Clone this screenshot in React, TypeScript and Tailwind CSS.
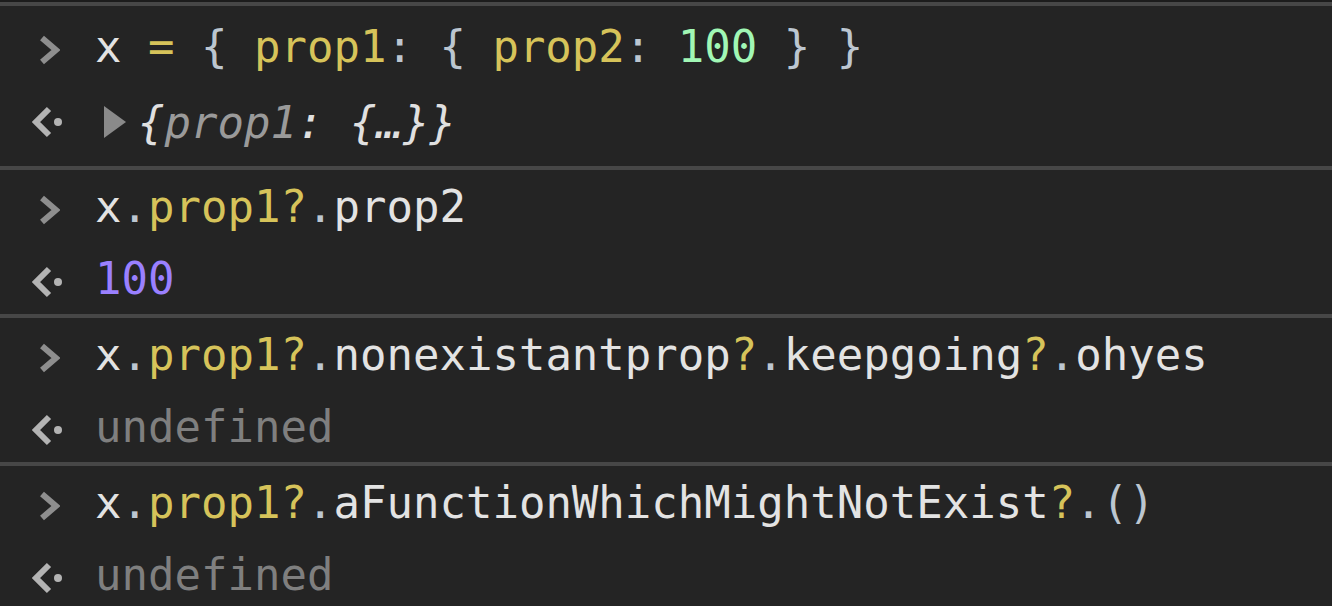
import React from "react";

const Y = "text-[#d6c35a]";
const P = "text-[#bcc6d0]";
const W = "text-[#e3e3e3]";

function Prompt() {
  return (
    <div className="w-[95px] shrink-0 pl-[39px] mt-[8px] flex items-center">
      <svg width="21" height="30" viewBox="0 0 21 30">
        <polyline points="3,3 17,15 3,27" fill="none" stroke="#8e8e8e" strokeWidth="6" strokeLinejoin="miter" />
      </svg>
    </div>
  );
}

function Result() {
  return (
    <div className="w-[95px] shrink-0 pl-[32px] mt-[8px] flex items-center">
      <svg width="32" height="32" viewBox="0 0 32 32">
        <polyline points="17,3 4,16 17,29" fill="none" stroke="#b3b3b3" strokeWidth="6" strokeLinejoin="miter" />
        <circle cx="26" cy="16" r="4" fill="#b3b3b3" />
      </svg>
    </div>
  );
}

function Row({ children }: { children: React.ReactNode }) {
  return <div className="h-[72px] flex items-center">{children}</div>;
}

function Sep() {
  return <div className="h-[4px] bg-[#474747]" />;
}

export default function App() {
  return (
    <div
      className="w-[1332px] h-[606px] overflow-hidden bg-[#242424] text-[44px] leading-[51px] whitespace-pre"
      style={{ fontFamily: '"DejaVu Sans Mono", "Liberation Mono", monospace' }}
    >
      <div className="h-[2px] bg-[#1c1c1c]" />
      <Sep />
      <div className="pt-[4px] pb-[12px]">
        <Row>
          <Prompt />
          <span>
            <span className={W}>x</span>
            <span className={Y}> = </span>
            <span className={P}>{"{ "}</span>
            <span className={Y}>prop1</span>
            <span className={P}>{": { "}</span>
            <span className={Y}>prop2</span>
            <span className={P}>: </span>
            <span className="text-[#a1f7b5]">100</span>
            <span className={P}>{" } }"}</span>
          </span>
        </Row>
        <Row>
          <Result />
          <div className="flex items-center mt-[8px]">
            <svg width="22" height="32" viewBox="0 0 22 32" className="ml-[9px]">
              <polygon points="0,0 22,16 0,32" fill="#8a8a8a" />
            </svg>
            <span className="italic ml-[12px]">
              <span className="text-[#e0e0e0]">{"{"}</span>
              <span className="text-[#9a9a9a]">prop1</span>
              <span className="text-[#e0e0e0]">{": {…}}"}</span>
            </span>
          </div>
        </Row>
      </div>
      <Sep />
      <Row>
        <Prompt />
        <span>
          <span className={W}>x</span>
          <span className={P}>.</span>
          <span className={Y}>prop1?</span>
          <span className={P}>.</span>
          <span className={W}>prop2</span>
        </span>
      </Row>
      <Row>
        <Result />
        <span className="text-[#9a80ff]">100</span>
      </Row>
      <Sep />
      <Row>
        <Prompt />
        <span>
          <span className={W}>x</span>
          <span className={P}>.</span>
          <span className={Y}>prop1?</span>
          <span className={P}>.</span>
          <span className={W}>nonexistantprop</span>
          <span className={Y}>?</span>
          <span className={P}>.</span>
          <span className={W}>keepgoing</span>
          <span className={Y}>?</span>
          <span className={P}>.</span>
          <span className={W}>ohyes</span>
        </span>
      </Row>
      <Row>
        <Result />
        <span className="text-[#7f7f7f]">undefined</span>
      </Row>
      <Sep />
      <Row>
        <Prompt />
        <span>
          <span className={W}>x</span>
          <span className={P}>.</span>
          <span className={Y}>prop1?</span>
          <span className={P}>.</span>
          <span className={W}>aFunctionWhichMightNotExist</span>
          <span className={Y}>?</span>
          <span className={P}>.()</span>
        </span>
      </Row>
      <Row>
        <Result />
        <span className="text-[#7f7f7f]">undefined</span>
      </Row>
    </div>
  );
}
